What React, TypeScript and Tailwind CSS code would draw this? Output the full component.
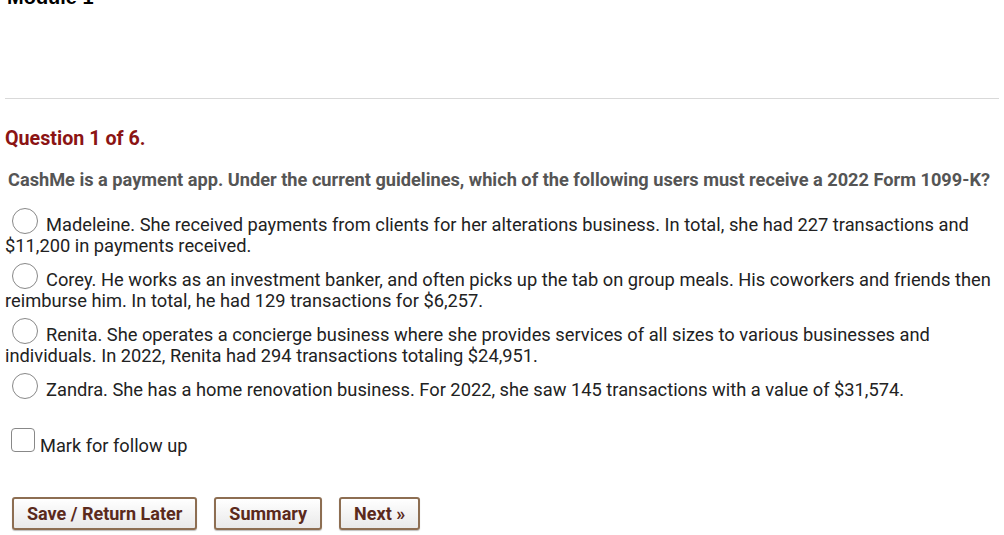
const options = [
  "Madeleine. She received payments from clients for her alterations business. In total, she had 227 transactions and $11,200 in payments received.",
  "Corey. He works as an investment banker, and often picks up the tab on group meals. His coworkers and friends then reimburse him. In total, he had 129 transactions for $6,257.",
  "Renita. She operates a concierge business where she provides services of all sizes to various businesses and individuals. In 2022, Renita had 294 transactions totaling $24,951.",
  "Zandra. She has a home renovation business. For 2022, she saw 145 transactions with a value of $31,574.",
];

const buttons = ["Save / Return Later", "Summary", "Next »"];

export default function App() {
  return (
    <div className="w-[1004px] h-[535px] overflow-hidden bg-white font-['Roboto',sans-serif] text-[#222]">
      <div className="h-[99px] flex flex-col border-b border-[#d9d9d9] mx-[5px]">
        <h1 className="-mt-[13px] pl-[2px] text-[20px] leading-[20px] font-bold font-['Liberation_Sans',sans-serif] text-black">Module 1</h1>
      </div>

      <div className="px-[5px]">
        <h2 className="mt-[29px] text-[19.7px] leading-[22px] font-bold text-[#8b1414]">Question 1 of 6.</h2>
        <p className="mt-[19px] ml-[3px] text-[18.2px] leading-[22px] font-bold text-[#555]">
          CashMe is a payment app. Under the current guidelines, which of the following users must receive a 2022 Form 1099-K?
        </p>

        <div className="mt-[23px] flex flex-col gap-[13px]">
          {options.map((o) => (
            <div key={o} className="text-[18.3px] leading-[21px]">
              <span className="inline-block align-[5.5px] -my-[8px] w-[26px] h-[26px] rounded-full border border-[#888] bg-white ml-[7px] mr-[8px]" />
              {o}
            </div>
          ))}
        </div>

        <label className="mt-[35px] flex items-center text-[18.2px] leading-[21px]">
          <span className="w-[24px] h-[24px] rounded-[4px] border border-[#888] ml-[6px] mr-[5px] -mt-[11px]" />
          Mark for follow up
        </label>

        <div className="mt-[41px] flex gap-[17px] ml-[7px]">
          {buttons.map((b) => (
            <button
              key={b}
              className="h-[33px] px-[13px] rounded-[3px] border-2 border-[#8d6e52] bg-gradient-to-b from-white to-[#e9e9e9] text-[18px] font-bold text-[#5b2a1c] shadow-[0_1px_1px_rgba(0,0,0,0.25)]"
            >
              {b}
            </button>
          ))}
        </div>
      </div>
    </div>
  );
}
